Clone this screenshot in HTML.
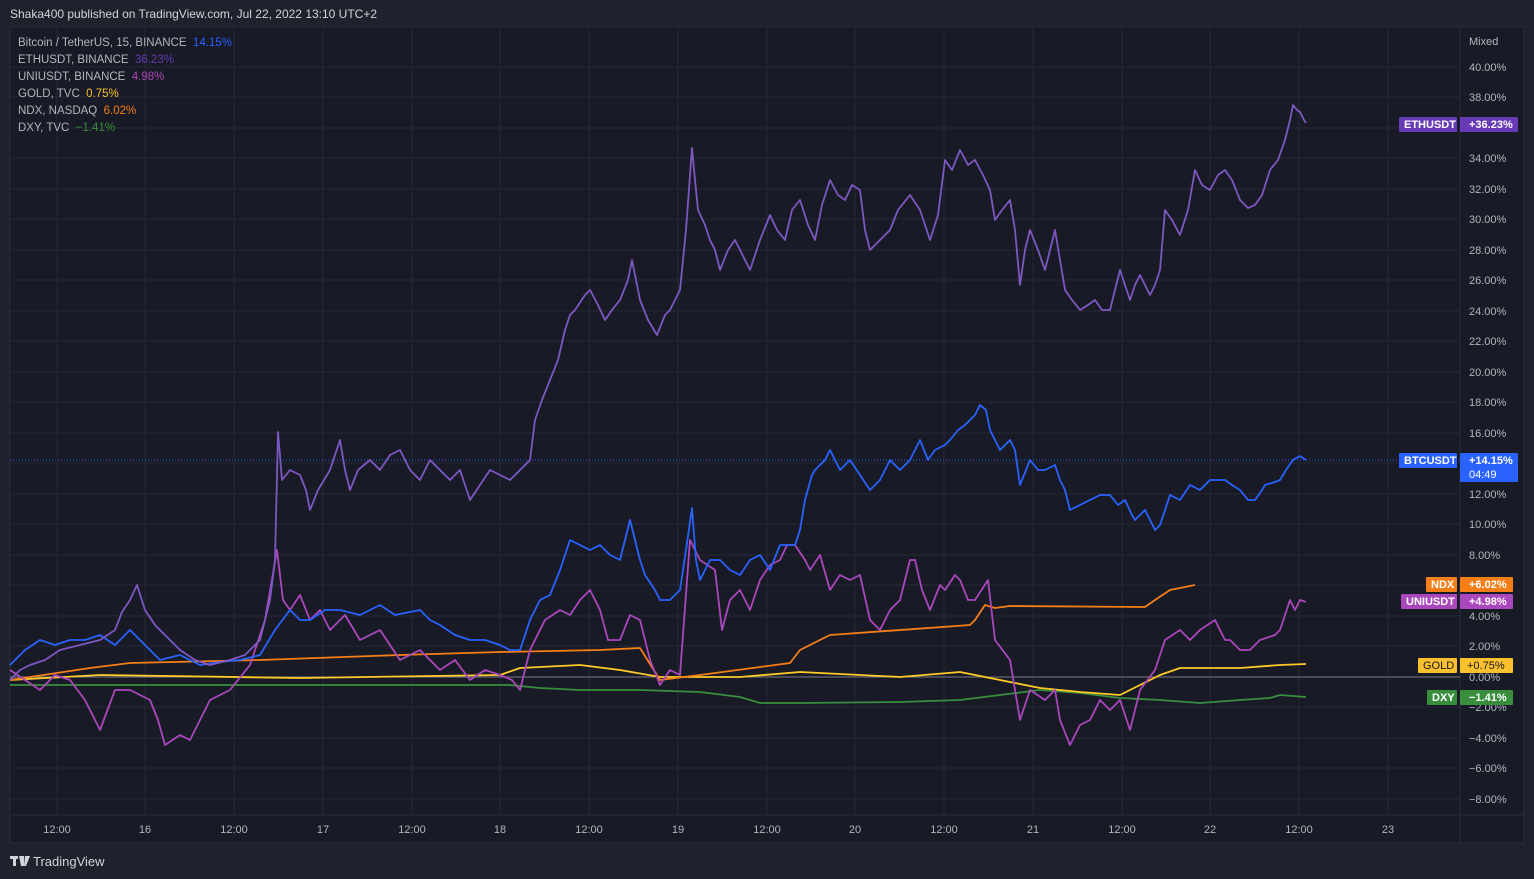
<!DOCTYPE html>
<html><head><meta charset="utf-8"><style>
body{margin:0;width:1534px;height:879px;background:#1e222d;font-family:"Liberation Sans",sans-serif;overflow:hidden;position:relative}
.t{position:absolute;font-size:12px;color:#b2b5be;white-space:nowrap}
</style></head><body>
<div class="t" style="left:10px;top:7px;color:#d1d4dc;font-size:12px">Shaka400 published on TradingView.com, Jul 22, 2022 13:10 UTC+2</div>
<svg width="1534" height="879" style="position:absolute;left:0;top:0" font-family="Liberation Sans, sans-serif">
<rect x="10" y="27" width="1514" height="816" fill="#181b26" stroke="#2a2e39"/>
<g stroke="#262a36" stroke-width="1">
<line x1="10" y1="67" x2="1460" y2="67"/><line x1="10" y1="97" x2="1460" y2="97"/><line x1="10" y1="128" x2="1460" y2="128"/><line x1="10" y1="158" x2="1460" y2="158"/><line x1="10" y1="189" x2="1460" y2="189"/><line x1="10" y1="219" x2="1460" y2="219"/><line x1="10" y1="250" x2="1460" y2="250"/><line x1="10" y1="280" x2="1460" y2="280"/><line x1="10" y1="311" x2="1460" y2="311"/><line x1="10" y1="341" x2="1460" y2="341"/><line x1="10" y1="372" x2="1460" y2="372"/><line x1="10" y1="402" x2="1460" y2="402"/><line x1="10" y1="433" x2="1460" y2="433"/><line x1="10" y1="463" x2="1460" y2="463"/><line x1="10" y1="494" x2="1460" y2="494"/><line x1="10" y1="524" x2="1460" y2="524"/><line x1="10" y1="555" x2="1460" y2="555"/><line x1="10" y1="585" x2="1460" y2="585"/><line x1="10" y1="616" x2="1460" y2="616"/><line x1="10" y1="646" x2="1460" y2="646"/><line x1="10" y1="707" x2="1460" y2="707"/><line x1="10" y1="738" x2="1460" y2="738"/><line x1="10" y1="768" x2="1460" y2="768"/><line x1="10" y1="799" x2="1460" y2="799"/>
<line x1="57" y1="27" x2="57" y2="815"/><line x1="145" y1="27" x2="145" y2="815"/><line x1="234" y1="27" x2="234" y2="815"/><line x1="323" y1="27" x2="323" y2="815"/><line x1="412" y1="27" x2="412" y2="815"/><line x1="500" y1="27" x2="500" y2="815"/><line x1="589" y1="27" x2="589" y2="815"/><line x1="678" y1="27" x2="678" y2="815"/><line x1="767" y1="27" x2="767" y2="815"/><line x1="855" y1="27" x2="855" y2="815"/><line x1="944" y1="27" x2="944" y2="815"/><line x1="1033" y1="27" x2="1033" y2="815"/><line x1="1122" y1="27" x2="1122" y2="815"/><line x1="1210" y1="27" x2="1210" y2="815"/><line x1="1299" y1="27" x2="1299" y2="815"/><line x1="1388" y1="27" x2="1388" y2="815"/>
</g>
<line x1="10" y1="815" x2="1524" y2="815" stroke="#2a2e39"/>
<line x1="1460" y1="27" x2="1460" y2="843" stroke="#2a2e39"/>
<line x1="10" y1="677" x2="1460" y2="677" stroke="#787b86"/>
<line x1="10" y1="460" x2="1460" y2="460" stroke="#2962ff" stroke-dasharray="1,2"/>
<g fill="none" stroke-width="1.8" stroke-linejoin="round">
<polyline stroke="#388e3c" points="10,685 510,685 540,688 580,690 640,690 700,692 740,697 760,703 800,703 900,702 960,700 1000,695 1040,690 1080,693 1120,698 1160,700 1200,703 1240,700 1270,698 1280,695 1306,697"/>
<polyline stroke="#ffca28" points="10,680 100,675 300,678 500,675 520,668 580,665 620,670 660,677 740,677 800,672 900,677 960,672 1000,680 1040,688 1080,692 1120,695 1140,685 1160,675 1180,668 1240,668 1280,665 1306,664"/>
<polyline stroke="#f57f17" points="10,680 90,668 130,663 260,660 400,655 500,652 600,650 640,648 660,680 700,675 790,663 800,650 830,635 970,625 975,620 985,605 995,608 1010,606 1145,607 1155,600 1170,590 1195,585"/>
<polyline stroke="#ab47bc" points="10,670 25,680 40,690 55,675 70,680 85,700 100,730 115,690 130,690 150,700 158,720 165,745 180,735 190,740 200,720 210,700 230,690 250,665 265,620 277,550 283,600 290,610 300,595 310,620 320,610 330,630 345,615 360,640 380,630 400,660 420,650 440,670 455,660 470,680 485,670 500,675 512,680 520,690 530,650 545,620 560,610 570,615 580,600 590,590 600,610 608,640 620,640 630,615 640,620 650,660 660,685 670,670 680,675 690,540 700,560 715,570 722,630 730,600 740,590 750,610 760,580 770,565 780,560 787,545 795,545 805,560 810,570 820,555 830,590 840,575 850,580 860,575 870,620 880,630 890,610 900,600 910,560 915,560 922,590 930,610 940,585 945,590 955,575 960,580 968,600 975,600 988,580 995,640 1010,660 1020,720 1030,690 1045,700 1055,690 1060,720 1070,745 1080,725 1090,720 1100,700 1110,710 1120,700 1130,730 1140,690 1155,670 1165,640 1180,630 1190,640 1200,630 1215,620 1225,640 1230,640 1240,650 1250,650 1260,640 1275,635 1280,630 1290,600 1295,610 1300,600 1306,602"/>
<polyline stroke="#2962ff" points="10,665 25,650 40,640 55,645 70,640 85,640 100,635 115,645 130,630 145,645 160,660 180,655 200,665 220,662 240,660 260,655 275,630 290,610 300,620 310,620 325,610 340,610 360,615 380,605 395,615 420,610 430,620 440,625 455,635 470,640 485,640 500,645 510,650 520,650 530,620 540,600 550,595 560,570 570,540 580,545 590,550 600,545 610,555 620,560 630,520 640,560 645,575 655,590 660,600 670,600 680,590 686,550 692,508 696,560 700,580 710,560 720,560 730,570 740,575 750,560 760,555 770,570 780,545 795,545 800,530 805,500 812,475 815,470 825,460 830,450 840,470 850,460 860,475 870,490 880,480 890,460 900,470 910,460 920,440 928,460 935,450 945,445 950,440 958,430 965,425 975,415 980,405 986,410 990,430 1000,450 1010,440 1015,450 1020,485 1030,460 1038,470 1045,470 1055,465 1060,480 1065,490 1070,510 1080,505 1090,500 1100,495 1110,495 1118,505 1125,500 1132,515 1135,520 1145,510 1150,520 1155,530 1160,525 1165,510 1170,495 1180,500 1190,485 1200,490 1210,480 1225,480 1232,485 1240,490 1248,500 1255,500 1262,490 1265,485 1275,482 1280,480 1286,470 1293,460 1300,456 1306,460"/>
<polyline stroke="#7e57c2" points="10,680 20,670 30,665 45,660 60,650 80,645 100,640 115,630 122,612 130,600 137,585 145,610 155,625 170,640 180,650 195,660 210,665 230,660 245,655 260,640 270,600 275,560 278,432 282,480 290,470 300,475 306,490 310,510 318,490 330,470 335,455 340,440 345,470 350,490 358,470 370,460 380,470 390,455 400,450 410,470 420,480 430,460 440,470 450,480 460,470 470,500 480,485 490,470 500,475 510,480 520,470 530,460 535,420 542,400 550,380 558,360 565,330 570,315 575,310 585,295 590,290 598,305 605,320 612,310 620,300 628,280 632,260 638,290 640,300 648,320 657,335 665,315 670,310 675,300 680,290 686,230 692,148 695,180 698,210 705,225 710,240 715,250 720,270 728,250 735,240 745,260 750,270 760,240 770,215 777,230 785,240 792,210 800,200 808,225 815,240 822,205 830,180 838,195 845,200 852,185 860,190 865,230 870,250 880,240 890,230 898,210 910,195 920,210 930,240 938,215 945,160 952,170 960,150 968,165 975,160 983,175 990,190 995,220 1002,210 1010,200 1015,230 1020,285 1025,250 1030,230 1038,250 1045,270 1050,250 1055,230 1060,260 1065,290 1072,300 1080,310 1088,305 1095,300 1102,310 1110,310 1115,290 1120,270 1125,285 1130,300 1135,285 1140,275 1145,285 1150,295 1155,285 1160,270 1165,210 1172,220 1180,235 1188,210 1195,170 1202,185 1210,190 1218,175 1225,170 1232,180 1240,200 1248,208 1255,205 1262,195 1270,170 1278,160 1285,140 1290,120 1293,105 1297,110 1300,112 1304,120 1306,123"/>
</g>
<g font-size="11" fill="#b2b5be">
<text x="1469" y="45">Mixed</text>
<text x="1469" y="71">40.00%</text><text x="1469" y="101">38.00%</text><text x="1469" y="162">34.00%</text><text x="1469" y="193">32.00%</text><text x="1469" y="223">30.00%</text><text x="1469" y="254">28.00%</text><text x="1469" y="284">26.00%</text><text x="1469" y="315">24.00%</text><text x="1469" y="345">22.00%</text><text x="1469" y="376">20.00%</text><text x="1469" y="406">18.00%</text><text x="1469" y="437">16.00%</text><text x="1469" y="498">12.00%</text><text x="1469" y="528">10.00%</text><text x="1469" y="559">8.00%</text><text x="1469" y="620">4.00%</text><text x="1469" y="650">2.00%</text><text x="1469" y="681">0.00%</text><text x="1469" y="711">−2.00%</text><text x="1469" y="742">−4.00%</text><text x="1469" y="772">−6.00%</text><text x="1469" y="803">−8.00%</text>
</g>
<g font-size="11" fill="#b2b5be" text-anchor="middle">
<text x="57" y="833">12:00</text><text x="145" y="833">16</text><text x="234" y="833">12:00</text><text x="323" y="833">17</text><text x="412" y="833">12:00</text><text x="500" y="833">18</text><text x="589" y="833">12:00</text><text x="678" y="833">19</text><text x="767" y="833">12:00</text><text x="855" y="833">20</text><text x="944" y="833">12:00</text><text x="1033" y="833">21</text><text x="1122" y="833">12:00</text><text x="1210" y="833">22</text><text x="1299" y="833">12:00</text><text x="1388" y="833">23</text>
</g>
<g font-size="11" font-weight="bold" fill="#fff">
<rect x="1399" y="117" width="58" height="15" rx="1" fill="#673ab7"/><rect x="1460" y="117" width="58" height="15" rx="1" fill="#673ab7"/>
<text x="1404" y="128">ETHUSDT</text><text x="1469" y="128">+36.23%</text>
<rect x="1399" y="453" width="58" height="15" rx="1" fill="#2962ff"/><rect x="1460" y="453" width="58" height="29" rx="1" fill="#2962ff"/>
<text x="1404" y="464">BTCUSDT</text><text x="1469" y="464">+14.15%</text><text x="1469" y="478" font-weight="normal">04:49</text>
<rect x="1426" y="577" width="31" height="15" rx="1" fill="#f57f17"/><rect x="1460" y="577" width="53" height="15" rx="1" fill="#f57f17"/>
<text x="1431" y="588">NDX</text><text x="1469" y="588">+6.02%</text>
<rect x="1401" y="594" width="56" height="15" rx="1" fill="#ab47bc"/><rect x="1460" y="594" width="53" height="15" rx="1" fill="#ab47bc"/>
<text x="1406" y="605">UNIUSDT</text><text x="1469" y="605">+4.98%</text>
<rect x="1418" y="658" width="39" height="15" rx="1" fill="#fbc02d"/><rect x="1460" y="658" width="53" height="15" rx="1" fill="#fbc02d"/>
<text x="1423" y="669" fill="#131722" font-weight="normal">GOLD</text><text x="1467" y="669" fill="#131722" font-weight="normal">+0.75%</text>
<rect x="1427" y="690" width="30" height="15" rx="1" fill="#388e3c"/><rect x="1460" y="690" width="53" height="15" rx="1" fill="#388e3c"/>
<text x="1432" y="701">DXY</text><text x="1469" y="701">−1.41%</text>
</g>
<g fill="#d1d4dc"><rect x="10" y="856" width="8" height="3"/><rect x="13" y="856" width="3" height="10"/><path d="M19 856h5v10h-3zM25 856h5l-4 10h-2z"/></g>
<text x="33" y="866" font-size="13" fill="#d1d4dc">TradingView</text>
</svg>
<div class="t" style="left:18px;top:35px;line-height:17px;font-size:11.5px">
<div>Bitcoin / TetherUS, 15, BINANCE&nbsp; <span style="color:#2962ff">14.15%</span></div>
<div>ETHUSDT, BINANCE&nbsp; <span style="color:#673ab7">36.23%</span></div>
<div>UNIUSDT, BINANCE&nbsp; <span style="color:#ab47bc">4.98%</span></div>
<div>GOLD, TVC&nbsp; <span style="color:#fbc02d">0.75%</span></div>
<div>NDX, NASDAQ&nbsp; <span style="color:#f57f17">6.02%</span></div>
<div>DXY, TVC&nbsp; <span style="color:#388e3c">−1.41%</span></div>
</div>
</body></html>
